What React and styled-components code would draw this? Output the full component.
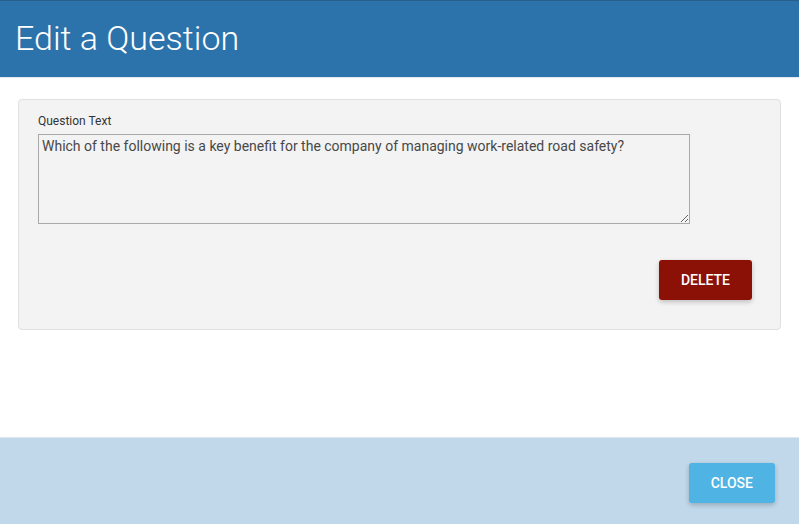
import React from 'react'
import styled, { createGlobalStyle } from 'styled-components'

const GlobalStyle = createGlobalStyle`
  html, body {
    margin: 0;
    padding: 0;
    background: #ffffff;
    font-family: Roboto, "Liberation Sans", sans-serif;
  }
`

const Modal = styled.div`
  width: 799px;
  height: 524px;
  display: flex;
  flex-direction: column;
  background: #fff;
`

const Header = styled.div`
  height: 78px;
  flex-shrink: 0;
  box-sizing: border-box;
  background: #2c73ab;
  border-top: 1px solid #275f8e;
  border-bottom: 1px solid #e4eaef;
  display: flex;
  align-items: center;
  padding: 0 15px 2px;
`

const Title = styled.h1`
  margin: 0;
  font-size: 34px;
  font-weight: 300;
  color: #fff;
`

const Body = styled.div`
  flex: 1;
  padding: 21px 18px 0;
`

const Card = styled.div`
  box-sizing: border-box;
  height: 231px;
  background: #f3f3f3;
  border: 1px solid #e0e0e0;
  border-radius: 4px;
  padding: 14px 28px 29px 19px;
  display: flex;
  flex-direction: column;
`

const Label = styled.label`
  font-size: 12px;
  color: #333;
  margin-bottom: 6px;
`

const TextArea = styled.textarea`
  box-sizing: border-box;
  width: 652px;
  height: 90px;
  background: #f3f3f3;
  border: 1px solid #a9a9a9;
  padding: 3px 3px;
  font-family: Roboto, "Liberation Sans", sans-serif;
  font-size: 14px;
  color: #484848;
  outline: none;
`

const Actions = styled.div`
  margin-top: auto;
  display: flex;
  justify-content: flex-end;
`

const Button = styled.button`
  height: 40px;
  padding: 0 ${p => p.$pad}px;
  border: none;
  border-radius: 3px;
  background: ${p => p.$bg};
  color: #fff;
  font-family: Roboto, "Liberation Sans", sans-serif;
  font-size: 14px;
  font-weight: 500;
  text-transform: uppercase;
  box-shadow: 0 2px 5px rgba(0, 0, 0, 0.22);
  cursor: pointer;
`

const Footer = styled.div`
  height: 87px;
  flex-shrink: 0;
  box-sizing: border-box;
  background: #c1d8ea;
  border-top: 1px solid #dfe6ec;
  display: flex;
  justify-content: flex-end;
  padding: 25px 24px 0 0;
`

export default function App() {
  return (
    <Modal>
      <GlobalStyle />
      <Header>
        <Title>Edit a Question</Title>
      </Header>
      <Body>
        <Card>
          <Label>Question Text</Label>
          <TextArea defaultValue="Which of the following is a key benefit for the company of managing work-related road safety?" />
          <Actions>
            <Button $bg="#8b1106" $pad={22}>Delete</Button>
          </Actions>
        </Card>
      </Body>
      <Footer>
        <Button $bg="#4fb3e3" $pad={22}>Close</Button>
      </Footer>
    </Modal>
  )
}
